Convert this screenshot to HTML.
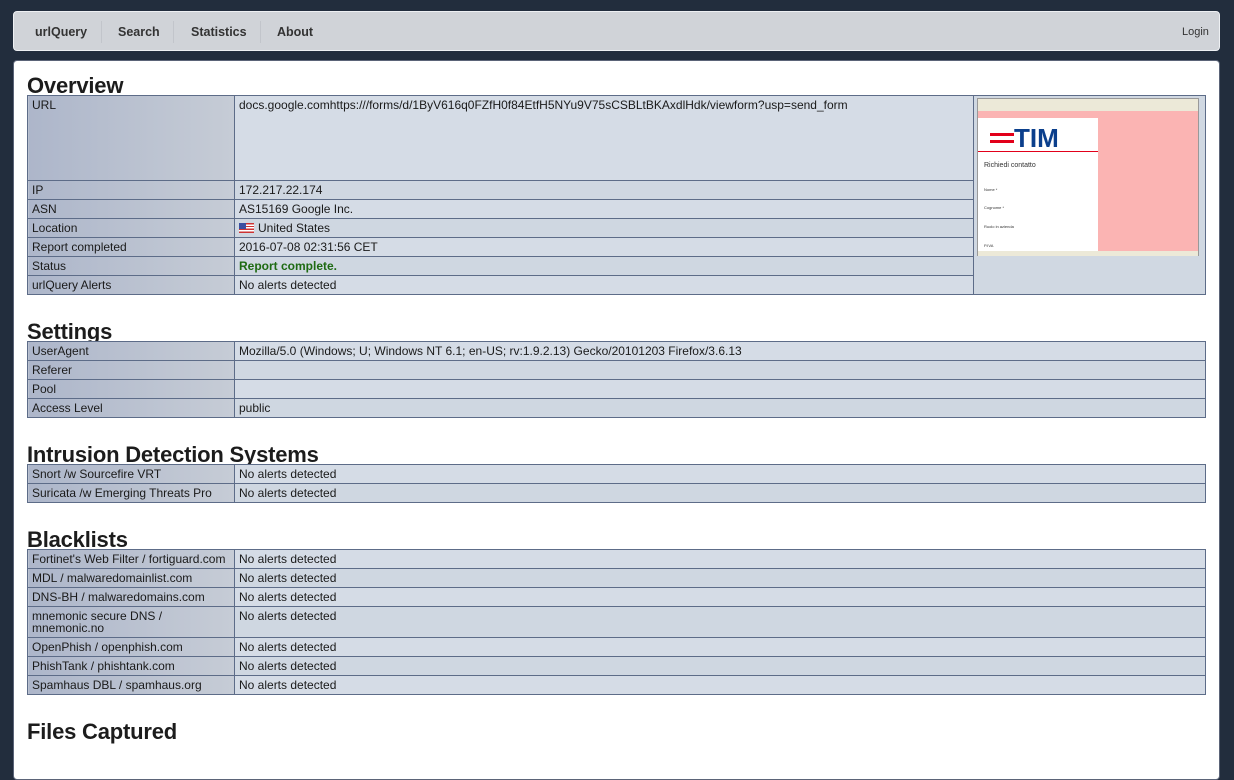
<!DOCTYPE html>
<html><head><style>
*{margin:0;padding:0;box-sizing:border-box}
body{width:1234px;height:761px;background:#222d3d;font-family:"Liberation Sans",Arial,sans-serif;overflow:hidden;position:relative;color:#1a1a1a}
.nav{position:absolute;left:13px;top:11px;width:1207px;height:40px;background:#d0d3d8;border:1px solid #eef0f3;border-radius:4px}
.nav a{position:absolute;top:13px;font-size:12.5px;font-weight:bold;color:#333;text-decoration:none}
.sep{position:absolute;top:9px;width:1px;height:22px;background:#c2c5cb}
.panel{position:absolute;left:13px;top:60px;width:1207px;height:720px;background:#fff;border:1px solid #5b6478;border-radius:4px}
h2{position:absolute;left:27px;font-size:22px;font-weight:bold;color:#1c1c1c;letter-spacing:-0.2px}
table{position:absolute;left:27px;width:1179px;border-collapse:collapse;font-size:12px}
td{border:1px solid #5d6c88;padding:3px 4px 0;vertical-align:top;height:19px;line-height:13px;background:#d5dce6}
td.l{width:207px;background:linear-gradient(90deg,#adb6ca,#c6ccd6)}
tr:nth-child(even) td:not(.l):not(.img){background:#cfd7e1}
.ok{color:#1e6a12;font-weight:bold}
</style></head><body>
<div class="nav">
<a style="left:21px">urlQuery</a><div class="sep" style="left:87px"></div>
<a style="left:104px">Search</a><div class="sep" style="left:159px"></div>
<a style="left:177px">Statistics</a><div class="sep" style="left:246px"></div>
<a style="left:263px">About</a>
<a style="left:1168px;font-weight:normal;font-size:11px;top:14px">Login</a>
</div>
<div class="panel"></div>
<h2 style="top:73px">Overview</h2>
<table style="top:95px">
<tr><td class="l" style="height:85px">URL</td><td style="width:739px">docs.google.comhttps:///forms/d/1ByV616q0FZfH0f84EtfH5NYu9V75sCSBLtBKAxdlHdk/viewform?usp=send_form</td>
<td class="img" rowspan="7" style="background:#d0d8e2;padding:2px 3px">
<div style="width:222px;height:158px;background:#f0efe6;position:relative;border:1px solid #999">
<div style="position:absolute;left:0;top:0;width:220px;height:12px;background:#ece9d8"></div>
<div style="position:absolute;left:0;top:12px;width:220px;height:140px;background:#fbb4b3"></div>
<div style="position:absolute;left:0;top:19px;width:120px;height:133px;background:#fff"></div>
<div style="position:absolute;left:12px;top:34px;width:24px;height:3px;background:#e2001a"></div>
<div style="position:absolute;left:12px;top:41px;width:24px;height:3px;background:#e2001a"></div>
<div style="position:absolute;left:36px;top:26px;font:bold 26px 'Liberation Sans';color:#0b3f8c;line-height:26px">TIM</div>
<div style="position:absolute;left:0;top:52px;width:120px;height:1px;background:#e2001a"></div>
<div style="position:absolute;left:6px;top:60px;font-size:7px;color:#333">Richiedi contatto</div>
<div style="position:absolute;left:6px;top:84px;font-size:4px;color:#333">Nome *</div>
<div style="position:absolute;left:6px;top:102px;font-size:4px;color:#333">Cognome *</div>
<div style="position:absolute;left:6px;top:121px;font-size:4px;color:#333">Ruolo in azienda</div>
<div style="position:absolute;left:6px;top:140px;font-size:4px;color:#333">P.IVA</div>
<div style="position:absolute;left:0;top:152px;width:220px;height:5px;background:#ece9d8"></div>
</div></td></tr>
<tr><td class="l">IP</td><td>172.217.22.174</td></tr>
<tr><td class="l">ASN</td><td>AS15169 Google Inc.</td></tr>
<tr><td class="l">Location</td><td><span style="display:inline-block;width:15px;height:10px;vertical-align:-1px;margin-right:4px;background:repeating-linear-gradient(#c33 0 1.4px,#fff 1.4px 2.8px);position:relative"><span style="position:absolute;left:0;top:0;width:7px;height:6px;background:#3a4fa0"></span></span>United States</td></tr>
<tr><td class="l">Report completed</td><td>2016-07-08 02:31:56 CET</td></tr>
<tr><td class="l">Status</td><td class="ok">Report complete.</td></tr>
<tr><td class="l">urlQuery Alerts</td><td>No alerts detected</td></tr>
</table>
<h2 style="top:319px">Settings</h2>
<table style="top:341px">
<tr><td class="l">UserAgent</td><td>Mozilla/5.0 (Windows; U; Windows NT 6.1; en-US; rv:1.9.2.13) Gecko/20101203 Firefox/3.6.13</td></tr>
<tr><td class="l">Referer</td><td></td></tr>
<tr><td class="l">Pool</td><td></td></tr>
<tr><td class="l">Access Level</td><td>public</td></tr>
</table>
<h2 style="top:442px">Intrusion Detection Systems</h2>
<table style="top:464px">
<tr><td class="l">Snort /w Sourcefire VRT</td><td>No alerts detected</td></tr>
<tr><td class="l">Suricata /w Emerging Threats Pro</td><td>No alerts detected</td></tr>
</table>
<h2 style="top:527px">Blacklists</h2>
<table style="top:549px">
<tr><td class="l">Fortinet's Web Filter / fortiguard.com</td><td>No alerts detected</td></tr>
<tr><td class="l">MDL / malwaredomainlist.com</td><td>No alerts detected</td></tr>
<tr><td class="l">DNS-BH / malwaredomains.com</td><td>No alerts detected</td></tr>
<tr><td class="l" style="height:31px;line-height:12px">mnemonic secure DNS / mnemonic.no</td><td>No alerts detected</td></tr>
<tr><td class="l">OpenPhish / openphish.com</td><td>No alerts detected</td></tr>
<tr><td class="l">PhishTank / phishtank.com</td><td>No alerts detected</td></tr>
<tr><td class="l">Spamhaus DBL / spamhaus.org</td><td>No alerts detected</td></tr>
</table>
<h2 style="top:719px">Files Captured</h2>
</body></html>
